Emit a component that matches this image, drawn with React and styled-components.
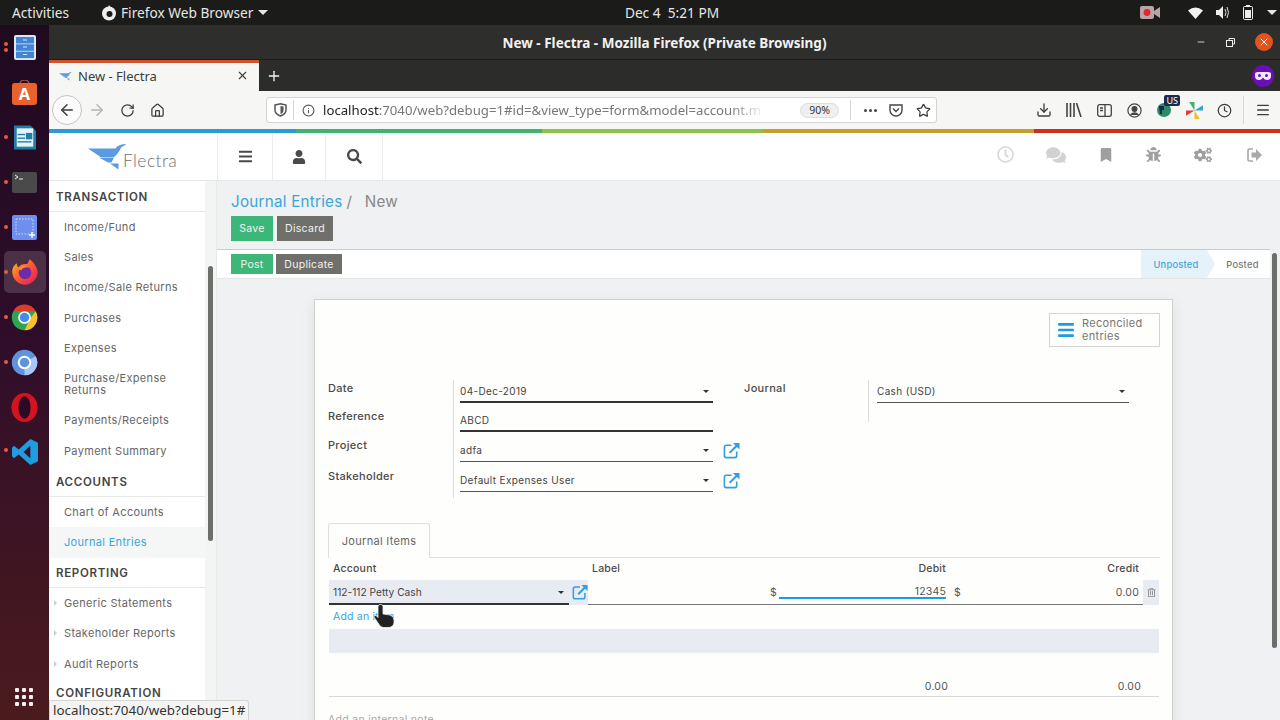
import React from "react";
import styled, { createGlobalStyle } from "styled-components";
import {
  ArrowLeft,
  ArrowRight,
  RotateCw,
  Home,
  Info,
  Star,
  Download,
  Clock,
  Menu,
  Minus,
  X,
  Plus,
} from "lucide-react";
import {
  FaBars,
  FaUser,
  FaSearch,
  FaRegClock,
  FaComments,
  FaBookmark,
  FaBug,
  FaCogs,
  FaRegTrashAlt,
} from "react-icons/fa";

const GlobalStyle = createGlobalStyle`
  html, body { margin: 0; padding: 0; background: #111; }
  * { box-sizing: border-box; }
`;

const Screen = styled.div`
  position: relative;
  width: 1280px;
  height: 720px;
  overflow: hidden;
  display: flex;
  flex-direction: column;
  font-family: "Inter", "Liberation Sans", sans-serif;
`;

const TopBar = styled.div`
  height: 25px;
  flex: none;
  background: #1b1b19;
  color: #e6e6e4;
  display: flex;
  align-items: center;
  font-family: "Noto Sans", sans-serif;
  font-size: 13.7px;
`;

const Activities = styled.span`
  margin-left: 12px;
  width: 88px;
`;

const AppMenu = styled.div`
  display: flex;
  align-items: center;
  gap: 4px;
  width: 500px;
  padding-left: 1px;
`;

const Caret = styled.span`
  width: 0;
  height: 0;
  border-left: 5px solid transparent;
  border-right: 5px solid transparent;
  border-top: 5px solid ${(p) => p.$color || "#e6e6e4"};
  margin-left: ${(p) => p.$gap || 0}px;
`;

const Clockface = styled.span`
  width: 100px;
  text-align: center;
  margin-left: 22px;
  white-space: nowrap;
`;

const Tray = styled.div`
  display: flex;
  align-items: center;
  margin-left: 418px;
  gap: 13px;
`;

const Desktop = styled.div`
  flex: 1;
  display: flex;
  min-height: 0;
`;

const Dock = styled.div`
  width: 49px;
  flex: none;
  background: linear-gradient(180deg, #1f0a20 0%, #2f0d2a 45%, #4b1b1d 100%);
  display: flex;
  flex-direction: column;
  align-items: center;
  padding-top: 1px;
  position: relative;
`;

const DockItem = styled.div`
  position: relative;
  width: 42px;
  height: 42px;
  margin-bottom: 3px;
  border-radius: 5px;
  display: flex;
  align-items: center;
  justify-content: center;
  background: ${(p) => (p.$active ? "rgba(255,255,255,0.15)" : "transparent")};
`;

const RunDot = styled.span`
  position: absolute;
  left: 0;
  top: ${(p) => p.$top || 19}px;
  width: 4px;
  height: 4px;
  border-radius: 50%;
  background: #e0603a;
`;

const GridDots = styled.div`
  position: absolute;
  left: 15px;
  bottom: 14px;
  display: grid;
  grid-template-columns: repeat(3, 4px);
  gap: 3px;
  span {
    width: 4px;
    height: 4px;
    background: #f3efee;
    border-radius: 1px;
  }
`;

const Browser = styled.div`
  flex: 1;
  min-width: 0;
  display: flex;
  flex-direction: column;
`;

const TitleBar = styled.div`
  height: 35px;
  flex: none;
  padding-top: 1px;
  background: #2e2e2c;
  border-bottom: 1px solid #1d1d1c;
  color: #f2f2f2;
  font-family: "Noto Sans", sans-serif;
  font-weight: 700;
  font-size: 13.5px;
  display: flex;
  align-items: center;
  position: relative;
  justify-content: center;
`;

const WindowButtons = styled.div`
  position: absolute;
  right: 7px;
  top: 8px;
  display: flex;
  align-items: center;
  gap: 20px;
  color: #eee;
`;

const CloseDot = styled.span`
  width: 18px;
  height: 18px;
  border-radius: 50%;
  background: #e2531f;
  display: flex;
  align-items: center;
  justify-content: center;
`;

const TabBar = styled.div`
  height: 31px;
  flex: none;
  background: #2c2c2a;
  display: flex;
  align-items: stretch;
  position: relative;
`;

const Tab = styled.div`
  width: 210px;
  background: #f6f6f5;
  border-top: 3px solid #d4512e;
  display: flex;
  align-items: center;
  padding: 0 10px 3px;
  font-family: "Noto Sans", sans-serif;
  font-size: 13px;
  color: #3c3c3c;
  gap: 5px;
`;

const TabTitle = styled.span`
  flex: 1;
`;

const NewTab = styled.div`
  width: 30px;
  color: #f5f5f5;
  display: flex;
  align-items: center;
  justify-content: center;
`;

const PrivateBadge = styled.div`
  position: absolute;
  right: 6px;
  top: 5px;
  width: 22px;
  height: 22px;
  border-radius: 50%;
  background: #6a0fb5;
  display: flex;
  align-items: center;
  justify-content: center;
`;

const Toolbar = styled.div`
  height: 38px;
  flex: none;
  background: #f6f6f5;
  display: flex;
  align-items: center;
  padding-left: 3px;
  color: #3d3d3d;
`;

const ToolBtn = styled.div`
  position: relative;
  width: ${(p) => p.$w || 30}px;
  height: 30px;
  flex: none;
  display: flex;
  align-items: center;
  justify-content: center;
  color: ${(p) => p.$color || "#3d3d3d"};
  border: ${(p) => (p.$ring ? "1px solid #c4c4c4" : "none")};
  border-radius: ${(p) => (p.$ring ? "50%" : "0")};
  background: ${(p) => (p.$ring ? "#fbfbfb" : "transparent")};
`;

const UrlBar = styled.div`
  width: 671px;
  height: 26px;
  flex: none;
  margin-left: 94px;
  background: #fff;
  border: 1px solid #d4d4d4;
  border-radius: 3px;
  display: flex;
  align-items: center;
  padding-left: 7px;
  font-family: "Noto Sans", sans-serif;
  font-size: 13.2px;
`;

const VSep = styled.span`
  width: 1px;
  height: ${(p) => p.$h || 20}px;
  flex: none;
  background: #d8d8d8;
  margin: 0 ${(p) => p.$m || 6}px;
`;

const UrlText = styled.div`
  width: 442px;
  margin-left: 8px;
  white-space: nowrap;
  color: #777;
  -webkit-mask-image: linear-gradient(90deg, #000 92%, transparent 100%);
  mask-image: linear-gradient(90deg, #000 92%, transparent 100%);
  b {
    font-weight: 400;
    color: #222;
  }
`;

const ZoomPill = styled.span`
  width: 39px;
  height: 15px;
  margin-left: 35px;
  border-radius: 8px;
  background: #efefef;
  border: 1px solid #ddd;
  font-size: 10.5px;
  color: #333;
  display: flex;
  align-items: center;
  justify-content: center;
`;

const MoreDots = styled.span`
  display: flex;
  gap: 2px;
  i {
    width: 3px;
    height: 3px;
    border-radius: 50%;
    background: #444;
  }
`;

const UsBadge = styled.span`
  position: absolute;
  right: -1px;
  top: 0;
  background: #1c2b4a;
  color: #fff;
  font-family: "Noto Sans", sans-serif;
  font-size: 9px;
  line-height: 11px;
  padding: 0 2px;
  border-radius: 2px;
`;

const Rainbow = styled.div`
  height: 4px;
  flex: none;
  display: flex;
`;

const RainbowPart = styled.span`
  display: block;
  height: 100%;
  width: ${(p) => p.$w}px;
  background: ${(p) => p.$c};
`;

const NavBar = styled.div`
  height: 48px;
  flex: none;
  background: #fff;
  border-bottom: 1px solid #e6e6e6;
  display: flex;
  align-items: stretch;
`;

const LogoCell = styled.div`
  width: 169px;
  flex: none;
  display: flex;
  align-items: center;
  padding-left: 39px;
  border-right: 1px solid #ececec;
`;

const LogoText = styled.span`
  font-family: "Lato", sans-serif;
  font-weight: 300;
  font-size: 17.5px;
  letter-spacing: 0.4px;
  color: #707070;
  margin: 7px 0 0 -6px;
`;

const NavCell = styled.div`
  width: ${(p) => p.$w}px;
  flex: none;
  display: flex;
  align-items: center;
  justify-content: center;
  border-right: 1px solid #ececec;
  color: #4a4a4a;
`;

const NavRight = styled.div`
  flex: 1;
  display: flex;
  justify-content: flex-end;
  align-items: center;
  padding: 0 1px 4px 0;
`;

const NavIcon = styled.div`
  width: ${(p) => p.$w || 50}px;
  display: flex;
  justify-content: center;
  color: ${(p) => p.$color || "#a0a0a0"};
  font-size: ${(p) => p.$size || 17}px;
`;

const Body = styled.div`
  flex: 1;
  min-height: 0;
  display: flex;
  background: #eff1f2;
`;

const Sidebar = styled.div`
  width: 156px;
  flex: none;
  background: #fff;
  overflow: hidden;
`;

const SideHead = styled.div`
  height: 30.5px;
  padding: 8.5px 0 0 7px;
  margin-top: ${(p) => (p.$tight ? -2 : 0)}px;
  border-bottom: 1px solid #e8e8e8;
  font-size: 11.5px;
  font-weight: 600;
  letter-spacing: 0.7px;
  color: #444;
  line-height: 15px;
  white-space: nowrap;
`;

const SideItem = styled.div`
  position: relative;
  min-height: 30.4px;
  padding: 9px 8px 9px 15px;
  font-size: 11px;
  line-height: 12px;
  letter-spacing: 0.32px;
  color: ${(p) => (p.$active ? "#3ba6d8" : "#666")};
  background: ${(p) => (p.$active ? "#f5f6f6" : "transparent")};
`;

const SideArrow = styled.span`
  position: absolute;
  left: 5px;
  top: 12px;
  border-left: 3px solid #ccc;
  border-top: 3px solid transparent;
  border-bottom: 3px solid transparent;
`;

const Gutter = styled.div`
  position: relative;
  width: 12px;
  flex: none;
  background: #f3f4f4;
  border-right: 1px solid #e8e9e9;
`;

const Thumb = styled.span`
  position: absolute;
  left: ${(p) => p.$left}px;
  top: ${(p) => p.$top}px;
  width: 5px;
  height: ${(p) => p.$h}px;
  border-radius: 3px;
  background: #6c6e6a;
`;

const Main = styled.div`
  flex: 1;
  min-width: 0;
  position: relative;
  overflow: hidden;
`;

const Breadcrumb = styled.div`
  padding: 13px 0 0 14px;
  height: 35px;
  font-size: 15.2px;
  line-height: 16px;
  letter-spacing: 0.25px;
  color: #888;
  a {
    color: #3ba6d8;
  }
  i {
    font-style: normal;
    margin: 0 8px 0 4px;
  }
`;

const ButtonRow = styled.div`
  display: flex;
  gap: ${(p) => p.$gap || 4}px;
  padding-left: 14px;
`;

const Btn = styled.div`
  height: ${(p) => p.$h || 25}px;
  width: ${(p) => p.$w}px;
  display: flex;
  align-items: center;
  justify-content: center;
  font-size: 10.5px;
  letter-spacing: 0.3px;
  color: #f2f2ee;
  background: ${(p) => (p.$gray ? "#6f6f6b" : "#3db67a")};
`;

const StatusBar = styled.div`
  height: 30px;
  margin-top: 8px;
  background: #fff;
  border-top: 1px solid #c9cccd;
  border-bottom: 1px solid #e4e6e6;
  margin-right: 10px;
  display: flex;
  align-items: center;
  justify-content: space-between;
`;

const Stages = styled.div`
  display: flex;
  align-self: stretch;
`;

const Stage = styled.div`
  width: ${(p) => p.$w}px;
  display: flex;
  align-items: center;
  justify-content: center;
  padding-right: ${(p) => p.$pr || 0}px;
  font-size: 9.3px;
  font-weight: 500;
  letter-spacing: 0.25px;
  color: ${(p) => (p.$on ? "#3ba6d8" : "#777")};
  background: ${(p) => (p.$on ? "#e6f2f9" : "transparent")};
  clip-path: ${(p) =>
    p.$on ? "polygon(0 0, 89% 0, 100% 50%, 89% 100%, 0 100%)" : "none"};
`;

const Sheet = styled.div`
  width: 859px;
  height: 460px;
  margin: 20px 0 0 97px;
  background: #fefefc;
  border: 1px solid #d0d0d0;
  box-shadow: 0 4px 14px rgba(0, 0, 0, 0.08);
  padding: 13px 12px 0 13px;
`;

const ButtonBox = styled.div`
  display: flex;
  justify-content: flex-end;
  height: 34px;
`;

const StatButton = styled.div`
  width: 111px;
  border: 1px solid #d4d4d4;
  display: flex;
  align-items: center;
  gap: 7px;
  padding-left: 7px;
  font-size: 11px;
  line-height: 13px;
  letter-spacing: 0.3px;
  color: #777;
`;

const BarsIcon = styled.span`
  width: 18px;
  height: 14px;
  flex: none;
  color: #1c9ce0;
  font-size: 18px;
  display: flex;
  align-items: center;
`;

const Groups = styled.div`
  display: flex;
  margin-top: 33px;
  color: #444;
`;

const Group = styled.div`
  width: ${(p) => p.$w}px;
  flex: none;
  display: grid;
  grid-template-columns: ${(p) => p.$label}px 1fr;
  align-self: flex-start;
`;

const FieldLabel = styled.div`
  height: ${(p) => p.$h}px;
  padding-top: ${(p) => p.$pt || 1}px;
  font-size: 11px;
  font-weight: 500;
  letter-spacing: 0.3px;
  line-height: 14px;
  color: #4a4a4a;
`;

const FieldCell = styled.div`
  height: ${(p) => p.$h}px;
  border-left: 1px solid #ddd;
  padding-left: ${(p) => p.$pl || 6}px;
  display: flex;
  align-items: flex-start;
`;

const Input = styled.div`
  width: ${(p) => p.$w || 253}px;
  height: ${(p) => p.$ih || 23}px;
  flex: none;
  display: flex;
  align-items: flex-end;
  justify-content: space-between;
  padding: 0 4px ${(p) => (p.$strong ? 3 : 4)}px 0;
  font-size: 10px;
  line-height: 14px;
  letter-spacing: 0.35px;
  color: #444;
  border-bottom: ${(p) => (p.$strong ? "2px solid #333" : "1px solid #555")};
`;

const SmallCaret = styled.span`
  width: 0;
  height: 0;
  margin-bottom: 5px;
  border-left: 3px solid transparent;
  border-right: 3px solid transparent;
  border-top: 3px solid #333;
`;

const LinkIcon = styled.span`
  margin: 10px 0 0 10px;
  display: flex;
`;

const TabNav = styled.div`
  margin-top: 25px;
  height: 35px;
  border-bottom: 1px solid #dedede;
`;

const TabBtn = styled.div`
  width: 102px;
  height: 35px;
  background: #fefefc;
  border: 1px solid #dedede;
  border-bottom: none;
  border-radius: 3px 3px 0 0;
  display: flex;
  align-items: center;
  justify-content: center;
  font-size: 11px;
  letter-spacing: 0.3px;
  color: #666;
`;

const Cols = styled.div`
  display: grid;
  margin-left: 1px;
  width: 830px;
  grid-template-columns: 259px 182px 180px 193px 16px;
  height: ${(p) => p.$h}px;
`;

const HeadCell = styled.div`
  padding: 4px 4px 0;
  text-align: ${(p) => (p.$right ? "right" : "left")};
  font-size: 10.5px;
  font-weight: 500;
  letter-spacing: 0.2px;
  color: #4a4a4a;
`;

const AccountCell = styled.div`
  position: relative;
  background: #e9ebf3;
  display: flex;
  align-items: flex-start;
  font-size: 10.2px;
  color: #444;
`;

const AccountInput = styled.div`
  width: 240px;
  height: 25px;
  border-bottom: 2px solid #333;
  padding: 1px 5px 0 4px;
  display: flex;
  align-items: center;
  justify-content: space-between;
  span {
    margin-bottom: 0;
  }
`;

const RowLink = styled.span`
  margin: 4px 0 0 3px;
  display: flex;
`;

const PlainCell = styled.div`
  border-bottom: 1px solid #777;
  display: flex;
  justify-content: space-between;
  padding: 6px 4px 0 ${(p) => p.$pl || 0}px;
  font-size: 10.5px;
  color: #555;
  letter-spacing: 0.2px;
  height: 25px;
`;

const DebitInput = styled.div`
  width: 168px;
  height: 13px;
  margin-left: 2px;
  text-align: right;
  line-height: 12px;
  border-bottom: 2px solid #1c9ce0;
`;

const TrashCell = styled.div`
  background: #e9ebf3;
  display: flex;
  align-items: center;
  justify-content: center;
  font-size: 9px;
  color: #888;
`;

const AddItem = styled.div`
  height: 24px;
  margin-left: 5px;
  padding-top: 5px;
  font-size: 10.5px;
  letter-spacing: 0.2px;
  color: #3ba6d8;
`;

const Band = styled.div`
  height: 24px;
  width: 830px;
  margin-left: 1px;
  background: #e9ebf3;
`;

const TotalsRow = styled.div`
  width: 830px;
  margin: 27px 0 0 1px;
  height: 17px;
  border-bottom: 1px solid #d8d8d8;
  display: grid;
  grid-template-columns: 619px 193px;
  font-size: 10.5px;
  color: #555;
  text-align: right;
  letter-spacing: 0.2px;
`;

const Note = styled.div`
  margin-top: 16px;
  font-size: 10.5px;
  letter-spacing: 0.3px;
  color: #aaa;
`;

const UrlTip = styled.div`
  position: absolute;
  left: 49px;
  bottom: 0;
  height: 20px;
  width: 200px;
  padding-left: 3px;
  background: #f4f4f2;
  border: 1px solid #d4d4d4;
  border-bottom: none;
  border-radius: 0 3px 0 0;
  font-family: "Noto Sans", sans-serif;
  font-size: 13.4px;
  line-height: 19px;
  color: #333;
  white-space: nowrap;
`;

const HandCursor = styled.svg`
  position: absolute;
  left: 372px;
  top: 604px;
`;

const ShareIcon = ({ size = 17 }) => (
  <svg width={size} height={size} viewBox="0 0 18 18" fill="none">
    <path
      d="M9 3.5H3.5A2 2 0 0 0 1.5 5.5v9a2 2 0 0 0 2 2h9a2 2 0 0 0 2-2V10"
      stroke="#2f9fdf"
      strokeWidth="1.7"
    />
    <path d="M7 11.5 14.5 4" stroke="#2f9fdf" strokeWidth="2.2" />
    <path d="M10.5 1H17.5V8Z" fill="#2f9fdf" />
  </svg>
);

const FlectraBird = ({ small }) => (
  <svg width={small ? 14 : 41} height={small ? 10 : 27} viewBox="0 0 41 27">
    <path d="M0 5.5H27.5Q30 1 38.5 1L33 4.5Q31 10 26 14H12.5Z" fill="#5b9be0" />
    <path d="M11 14.5H26L23.5 19.5H20Z" fill="#5b9be0" />
    <path d="M22 20.5H30.5V26.5Z" fill="#5b9be0" />
  </svg>
);

const FirefoxIcon = () => (
  <svg width="30" height="30" viewBox="0 0 38 38">
    <defs>
      <linearGradient id="fx" x1="0" y1="0" x2="1" y2="1">
        <stop offset="0" stopColor="#ffbd2e" />
        <stop offset="0.5" stopColor="#ff5230" />
        <stop offset="1" stopColor="#d81b60" />
      </linearGradient>
    </defs>
    <path d="M19 35A16 16 0 0 1 4 13Q6 9 9 8Q8 12 11 13Q15 8 22 9Q24 5 25 3Q34 10 35 19A16 16 0 0 1 19 35Z" fill="url(#fx)" />
    <circle cx="19" cy="20" r="8" fill="#6a2ca8" />
    <path d="M10 15Q15 9 24 13Q17 12 14 17Z" fill="#ff8a1e" />
  </svg>
);

const ChromeIcon = ({ blue }) => (
  <svg width="27" height="27" viewBox="0 0 34 34">
    {blue ? (
      <>
        <circle cx="17" cy="17" r="16" fill="#5f93de" />
        <path d="M17 17 31 9A16 16 0 0 1 17 33Z" fill="#a8c7f5" />
        <circle cx="17" cy="17" r="8.5" fill="#fff" />
        <circle cx="17" cy="17" r="6" fill="#5f93de" />
      </>
    ) : (
      <>
        <circle cx="17" cy="17" r="16" fill="#2da44e" />
        <path d="M3 9A16 16 0 0 1 31 9H17Z" fill="#e0392d" />
        <path d="M31 9A16 16 0 0 1 17 33L25 17Z" fill="#fbc02d" />
        <circle cx="17" cy="17" r="8" fill="#fff" />
        <circle cx="17" cy="17" r="6" fill="#4a8af0" />
      </>
    )}
  </svg>
);

const rainbow = [
  [247, "#2c9ad8"],
  [246, "#3cb371"],
  [221, "#8bc34a"],
  [271, "#c59f2a"],
  [246, "#cf2f20"],
];

const transactionItems = [
  "Income/Fund",
  "Sales",
  "Income/Sale Returns",
  "Purchases",
  "Expenses",
  "Purchase/Expense Returns",
  "Payments/Receipts",
  "Payment Summary",
];

const App = () => {
  return (
    <Screen>
      <GlobalStyle />
      <TopBar>
        <Activities>Activities</Activities>
        <AppMenu>
          <svg width="16" height="16" viewBox="0 0 16 16">
            <circle cx="8" cy="8.5" r="7" fill="#eee" />
            <circle cx="8.5" cy="9" r="3" fill="#1b1b19" />
            <path d="M8 0 11 4 6 5Z" fill="#eee" />
          </svg>
          <span>Firefox Web Browser</span>
          <Caret $gap={1} />
        </AppMenu>
        <Clockface>Dec 4&nbsp; 5:21 PM</Clockface>
        <Tray>
          <svg width="20" height="13" viewBox="0 0 20 13">
            <rect width="14" height="13" rx="2" fill="#b9a5a5" />
            <circle cx="7" cy="6.5" r="3.4" fill="#d92b2b" />
            <path d="M14 5 20 1V12L14 8Z" fill="#b9a5a5" />
          </svg>
          <span style={{ width: 2 }} />
          <svg width="15" height="12" viewBox="0 0 15 12">
            <path d="M0 3.5Q7.5 -2.5 15 3.5L7.5 12Z" fill="#f2f2f2" />
          </svg>
          <svg width="14" height="13" viewBox="0 0 14 13" fill="none">
            <path d="M0 4H3L7 0V13L3 9H0Z" fill="#eee" />
            <path d="M9 3Q11 6.5 9 10M11 1Q14 6.5 11 12" stroke="#ddd" />
          </svg>
          <svg width="10" height="15" viewBox="0 0 10 15">
            <rect x="0.5" y="1.5" width="9" height="13" rx="1" fill="none" stroke="#eee" />
            <rect x="3" y="0" width="4" height="2" fill="#eee" />
            <rect x="2" y="5" width="6" height="8" fill="#eee" />
          </svg>
          <Caret $gap={1} />
        </Tray>
      </TopBar>
      <Desktop>
        <Dock>
          <DockItem>
            <RunDot $top={16} />
            <RunDot $top={22} />
            <svg width="22" height="25" viewBox="0 0 22 25">
              <rect width="22" height="25" rx="2" fill="#dfe8f2" />
              <rect x="2" y="2" width="18" height="6.5" fill="#3f87d6" />
              <rect x="2" y="9.3" width="18" height="6.5" fill="#3f87d6" />
              <rect x="2" y="16.6" width="18" height="6.5" fill="#3f87d6" />
              <rect x="9" y="4.5" width="4" height="1" fill="#dfe8f2" />
              <rect x="9" y="11.5" width="4" height="1" fill="#dfe8f2" />
              <rect x="9" y="19" width="4" height="1" fill="#dfe8f2" />
            </svg>
          </DockItem>
          <DockItem>
            <svg width="25" height="25" viewBox="0 0 26 26">
              <path d="M8 5Q8 0 13 0T18 5" fill="none" stroke="#e8764a" />
              <rect y="3" width="26" height="23" rx="3" fill="#e8622f" />
              <text x="13" y="21" textAnchor="middle" fontFamily="Noto Sans" fontWeight="700" fontSize="17" fill="#fff">
                A
              </text>
            </svg>
          </DockItem>
          <DockItem>
            <RunDot />
            <svg width="22" height="25" viewBox="0 0 24 26">
              <path d="M0 0H18L24 6V26H0Z" fill="#1f7fa8" />
              <rect x="3" y="3" width="18" height="20" fill="#e8f2f6" />
              <rect x="4" y="9" width="8" height="1.5" fill="#1f7fa8" />
              <rect x="4" y="13" width="8" height="1.5" fill="#1f7fa8" />
              <rect x="4" y="17" width="15" height="1.5" fill="#1f7fa8" />
              <rect x="13" y="8" width="7" height="7" fill="#1f7fa8" />
            </svg>
          </DockItem>
          <DockItem>
            <RunDot />
            <svg width="25" height="21" viewBox="0 0 25 21">
              <rect width="25" height="21" rx="2" fill="#4a4a4a" />
              <path d="M3 3 6 5 3 7M7 7H11" stroke="#eee" fill="none" />
            </svg>
          </DockItem>
          <DockItem>
            <RunDot />
            <svg width="25" height="25" viewBox="0 0 25 25">
              <rect width="25" height="25" rx="2" fill="#6f8ff0" />
              <rect x="4" y="4" width="17" height="15" fill="none" stroke="#cfdafc" strokeDasharray="1.5 1.5" />
              <path d="M17 20H23M20 17V23" stroke="#fff" strokeWidth="1.4" />
            </svg>
          </DockItem>
          <DockItem $active>
            <RunDot />
            <FirefoxIcon />
          </DockItem>
          <DockItem>
            <RunDot />
            <ChromeIcon />
          </DockItem>
          <DockItem>
            <RunDot />
            <ChromeIcon blue />
          </DockItem>
          <DockItem>
            <svg width="27" height="29" viewBox="0 0 28 31">
              <ellipse cx="14" cy="15.5" rx="14" ry="15.5" fill="#d3141f" />
              <ellipse cx="14" cy="15.5" rx="6.5" ry="12" fill="#2a0a24" />
            </svg>
          </DockItem>
          <DockItem>
            <RunDot $top={17} />
            <svg width="26" height="26" viewBox="0 0 27 27">
              <path d="M19 0 27 4V23L19 27 7 16 2 20 0 18V9L2 7 7 11ZM19 7 12 13.5 19 20Z" fill="#1f9ce0" />
            </svg>
          </DockItem>
          <GridDots>
            {Array.from({ length: 9 }, (_, i) => (
              <span key={i} />
            ))}
          </GridDots>
        </Dock>
        <Browser>
          <TitleBar>
            <span>New - Flectra - Mozilla Firefox (Private Browsing)</span>
            <WindowButtons>
              <Minus size={10} />
              <svg width="9" height="9" viewBox="0 0 9 9" fill="none" stroke="#eee">
                <rect x="0.5" y="2.5" width="6" height="6" />
                <path d="M3 2V.5H8.5V6H7" />
              </svg>
              <CloseDot>
                <X size={12} color="#fff" />
              </CloseDot>
            </WindowButtons>
          </TitleBar>
          <TabBar>
            <Tab>
              <FlectraBird small />
              <TabTitle>New - Flectra</TabTitle>
              <X size={13} strokeWidth={2} />
            </Tab>
            <NewTab>
              <Plus size={16} strokeWidth={2} />
            </NewTab>
            <PrivateBadge>
              <svg width="16" height="8" viewBox="0 0 16 8">
                <path d="M0 2Q0 0 3 0H13Q16 0 16 2V4Q16 8 12 8Q9.5 8 8 5.5Q6.5 8 4 8Q0 8 0 4Z" fill="#f3e8fb" />
                <circle cx="4.5" cy="3.5" r="1.5" fill="#6a0fb5" />
                <circle cx="11.5" cy="3.5" r="1.5" fill="#6a0fb5" />
              </svg>
            </PrivateBadge>
          </TabBar>
          <Toolbar>
            <ToolBtn $ring>
              <ArrowLeft size={18} />
            </ToolBtn>
            <ToolBtn $color="#b5b5b5">
              <ArrowRight size={18} />
            </ToolBtn>
            <ToolBtn>
              <RotateCw size={15} />
            </ToolBtn>
            <ToolBtn>
              <Home size={15} />
            </ToolBtn>
            <UrlBar>
              <svg width="13" height="14" viewBox="0 0 13 14" fill="none">
                <path d="M1 2 6.5 .8 12 2V7Q12 11 6.5 13 1 11 1 7Z" stroke="#555" strokeWidth="1.5" />
                <path d="M6.5 3V11Q9.5 10 9.5 7V3.5Z" fill="#555" />
              </svg>
              <VSep />
              <Info size={13} color="#555" style={{ marginLeft: 2, flex: "none" }} />
              <UrlText>
                <b>localhost</b>:7040/web?debug=1#id=&amp;view_type=form&amp;model=account.m
              </UrlText>
              <ZoomPill>90%</ZoomPill>
              <VSep $m={11} />
              <ToolBtn $w={16}>
                <MoreDots>
                  <i />
                  <i />
                  <i />
                </MoreDots>
              </ToolBtn>
              <ToolBtn $w={36}>
                <svg width="14" height="13" viewBox="0 0 14 13" fill="none">
                  <path d="M1 1H13V6A6 6 0 0 1 1 6Z" stroke="#444" strokeWidth="1.4" />
                  <path d="M4 4.5 7 7.5 10 4.5" stroke="#444" strokeWidth="1.4" />
                </svg>
              </ToolBtn>
              <ToolBtn $w={18}>
                <Star size={15} />
              </ToolBtn>
            </UrlBar>
            <ToolBtn style={{ marginLeft: 92 }}>
              <Download size={16} />
            </ToolBtn>
            <ToolBtn>
              <svg width="16" height="14" viewBox="0 0 16 14" stroke="#444" strokeWidth="1.6" fill="none">
                <path d="M1 0V14M4.5 0V14M8 0V14M10.5 0 15 14" />
              </svg>
            </ToolBtn>
            <ToolBtn>
              <svg width="15" height="13" viewBox="0 0 15 13" fill="none" stroke="#444" strokeWidth="1.3">
                <rect x="0.7" y="0.7" width="13.6" height="11.6" rx="2" />
                <path d="M8 1V12M3 4H6M3 6.5H6" />
              </svg>
            </ToolBtn>
            <ToolBtn>
              <svg width="15" height="15" viewBox="0 0 15 15" fill="none" stroke="#444" strokeWidth="1.2">
                <circle cx="7.5" cy="7.5" r="6.6" />
                <circle cx="7.5" cy="6" r="2.4" fill="#444" />
                <path d="M3.5 12Q7.5 8 11.5 12" fill="#444" />
              </svg>
            </ToolBtn>
            <ToolBtn>
              <svg width="14" height="14" viewBox="0 0 14 14">
                <circle cx="7" cy="7" r="7" fill="#2c8a6a" />
                <path d="M2 3H7V7H5V11H3Z" fill="#1c2b4a" />
              </svg>
              <UsBadge>US</UsBadge>
            </ToolBtn>
            <ToolBtn>
              <svg width="17" height="17" viewBox="0 0 16 16">
                <path d="M8 8 3 0H8Z" fill="#3cb371" />
                <path d="M8 8 16 3V8Z" fill="#2aa6d8" />
                <path d="M8 8 13 16H8Z" fill="#f0c020" />
                <path d="M8 8 0 13V8Z" fill="#e0402a" />
              </svg>
            </ToolBtn>
            <ToolBtn>
              <Clock size={15} />
            </ToolBtn>
            <VSep $h={28} $m={4} />
            <ToolBtn>
              <Menu size={16} />
            </ToolBtn>
          </Toolbar>
          <Rainbow>
            {rainbow.map(([w, c]) => (
              <RainbowPart key={c} $w={w} $c={c} />
            ))}
          </Rainbow>
          <NavBar>
            <LogoCell>
              <FlectraBird />
              <LogoText>Flectra</LogoText>
            </LogoCell>
            <NavCell $w={55}>
              <FaBars size={15} />
            </NavCell>
            <NavCell $w={53}>
              <FaUser size={14} />
            </NavCell>
            <NavCell $w={57}>
              <FaSearch size={15} />
            </NavCell>
            <NavRight>
              <NavIcon $color="#d8d8d8" $w={52}>
                <FaRegClock />
              </NavIcon>
              <NavIcon $color="#d2d2d2" $size={20}>
                <FaComments />
              </NavIcon>
              <NavIcon $color="#9f9f9f" $size={14} $w={49}>
                <FaBookmark />
              </NavIcon>
              <NavIcon $color="#9f9f9f" $w={47} $size={15}>
                <FaBug />
              </NavIcon>
              <NavIcon $color="#9f9f9f" $size={18} $w={52}>
                <FaCogs />
              </NavIcon>
              <NavIcon $color="#a8a8a8" $size={15}>
                <svg width="15" height="14" viewBox="0 0 15 14" fill="currentColor">
                  <path d="M6 1H2.5Q1 1 1 2.5V11.5Q1 13 2.5 13H6" fill="none" stroke="currentColor" strokeWidth="1.6" />
                  <path d="M9 1 15 7 9 13V9.5H4.5V4.5H9Z" />
                </svg>
              </NavIcon>
            </NavRight>
          </NavBar>
          <Body>
            <Sidebar>
              <SideHead>TRANSACTION</SideHead>
              {transactionItems.map((label) => (
                <SideItem key={label}>{label}</SideItem>
              ))}
              <SideHead>ACCOUNTS</SideHead>
              <SideItem>Chart of Accounts</SideItem>
              <SideItem $active>Journal Entries</SideItem>
              <SideHead>REPORTING</SideHead>
              <SideItem>
                <SideArrow />
                Generic Statements
              </SideItem>
              <SideItem>
                <SideArrow />
                Stakeholder Reports
              </SideItem>
              <SideItem>
                <SideArrow />
                Audit Reports
              </SideItem>
              <SideHead $tight>CONFIGURATION</SideHead>
            </Sidebar>
            <Gutter>
              <Thumb $left={3} $top={85} $h={275} />
            </Gutter>
            <Main>
              <Breadcrumb>
                <a>Journal Entries</a>
                <i>/</i> New
              </Breadcrumb>
              <ButtonRow>
                <Btn $w={42}>Save</Btn>
                <Btn $w={56} $gray>
                  Discard
                </Btn>
              </ButtonRow>
              <StatusBar>
                <ButtonRow $gap={3}>
                  <Btn $w={42} $h={20}>
                    Post
                  </Btn>
                  <Btn $w={66} $h={20} $gray>
                    Duplicate
                  </Btn>
                </ButtonRow>
                <Stages>
                  <Stage $w={74} $on $pr={4}>
                    Unposted
                  </Stage>
                  <Stage $w={55}>Posted</Stage>
                </Stages>
              </StatusBar>
              <Sheet>
                <ButtonBox>
                  <StatButton>
                    <BarsIcon>
                      <FaBars />
                    </BarsIcon>
                    <span>
                      Reconciled
                      <br />
                      entries
                    </span>
                  </StatButton>
                </ButtonBox>
                <Groups>
                  <Group $w={416} $label={125}>
                    <FieldLabel $h={23}>Date</FieldLabel>
                    <FieldCell $h={23}>
                      <Input $strong>
                        04-Dec-2019
                        <SmallCaret />
                      </Input>
                    </FieldCell>
                    <FieldLabel $h={29} $pt={6}>
                      Reference
                    </FieldLabel>
                    <FieldCell $h={29}>
                      <Input $strong $ih={29}>
                        ABCD
                      </Input>
                    </FieldCell>
                    <FieldLabel $h={30} $pt={6}>
                      Project
                    </FieldLabel>
                    <FieldCell $h={30}>
                      <Input $ih={30}>
                        adfa
                        <SmallCaret />
                      </Input>
                      <LinkIcon>
                        <ShareIcon />
                      </LinkIcon>
                    </FieldCell>
                    <FieldLabel $h={36} $pt={7}>
                      Stakeholder
                    </FieldLabel>
                    <FieldCell $h={36}>
                      <Input $ih={30}>
                        Default Expenses User
                        <SmallCaret />
                      </Input>
                      <LinkIcon>
                        <ShareIcon />
                      </LinkIcon>
                    </FieldCell>
                  </Group>
                  <Group $w={385} $label={124}>
                    <FieldLabel $h={42}>Journal</FieldLabel>
                    <FieldCell $h={42} $pl={8}>
                      <Input $w={252}>
                        Cash (USD)
                        <SmallCaret />
                      </Input>
                    </FieldCell>
                  </Group>
                </Groups>
                <TabNav>
                  <TabBtn>Journal Items</TabBtn>
                </TabNav>
                <Cols $h={22}>
                  <HeadCell>Account</HeadCell>
                  <HeadCell>Label</HeadCell>
                  <HeadCell $right>Debit</HeadCell>
                  <HeadCell $right>Credit</HeadCell>
                </Cols>
                <Cols $h={25}>
                  <AccountCell>
                    <AccountInput>
                      112-112 Petty Cash
                      <SmallCaret />
                    </AccountInput>
                    <RowLink>
                      <ShareIcon size={16} />
                    </RowLink>
                  </AccountCell>
                  <PlainCell />
                  <PlainCell>
                    $<DebitInput>12345</DebitInput>
                  </PlainCell>
                  <PlainCell $pl={4}>
                    $<span>0.00</span>
                  </PlainCell>
                  <TrashCell>
                    <FaRegTrashAlt />
                  </TrashCell>
                </Cols>
                <AddItem>Add an item</AddItem>
                <Band />
                <TotalsRow>
                  <span>0.00</span>
                  <span>0.00</span>
                </TotalsRow>
                <Note>Add an internal note</Note>
              </Sheet>
              <Thumb $left={1055} $top={72} $h={395} />
            </Main>
          </Body>
        </Browser>
      </Desktop>
      <UrlTip>localhost:7040/web?debug=1#</UrlTip>
      <HandCursor width="24" height="24" viewBox="0 0 24 24">
        <path d="M6 2Q6.500 0.500 8.500 0.500 10.500 0.500 11 2V10L18 11Q22 12 22 16V19Q21 23.500 16 23.500H11Q8 23 6 19L2 13Q1.500 11 4 11.500L6 13.500Z" fill="#222" stroke="#f2f2f2" strokeWidth="0.8" />
      </HandCursor>
    </Screen>
  );
};

export default App;
